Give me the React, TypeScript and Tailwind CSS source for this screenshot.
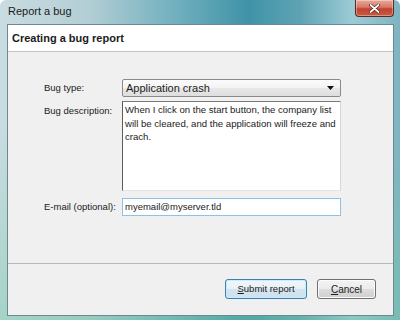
export default function App() {
  return (
    <div className="w-[400px] h-[320px] flex flex-col overflow-hidden rounded-t-[6px] bg-[linear-gradient(180deg,rgba(0,0,0,0)_0%,rgba(0,0,0,0)_40%,rgba(110,200,160,0.4)_100%),linear-gradient(90deg,#c9dce1_0%,#b3ced5_22%,#6eaebd_45%,#3f93a7_62%,#5ea3b4_75%,#9ccbd5_88%,#7fb3c1_100%)] font-['Liberation_Sans',Arial,sans-serif] text-[#1b1b1b]">
      {/* title bar */}
      <div className="h-[24px] flex items-start justify-between shrink-0">
        <div className="pl-[8px] pt-[5px] text-[11px] leading-[13px] text-[#1a1a1a]">Report a bug</div>
        <button className="mr-[6px] w-[39px] h-[17px] rounded-b-[4px] border border-t-0 border-[#5a2a24] bg-[linear-gradient(180deg,#e7aa9d_0%,#d77766_45%,#c0432f_55%,#c85a3f_100%)] flex items-center justify-center shadow-[inset_0_0_0_1px_rgba(255,255,255,0.35)]">
          <svg width="11" height="9" viewBox="0 0 11 9">
            <path d="M1.5 1 L9.5 8 M9.5 1 L1.5 8" stroke="#4a1a14" strokeWidth="3" strokeLinecap="round" />
            <path d="M1.5 1 L9.5 8 M9.5 1 L1.5 8" stroke="#ffffff" strokeWidth="1.8" strokeLinecap="round" />
          </svg>
        </button>
      </div>

      {/* client area */}
      <div className="flex-1 ml-[7px] mr-[6px] mb-[4px] border border-[#6f8790] bg-[#f0f0f0] flex flex-col">
        <div className="h-[27px] shrink-0 bg-white border-b border-[#c8c2c2] flex items-center pl-[4px] text-[11px] font-bold">
          Creating a bug report
        </div>

        <div className="flex-1 pt-[27px] pl-[36px] flex flex-col gap-[4px]">
          <div className="flex items-center">
            <div className="w-[78px] text-[9.5px]">Bug type:</div>
            <div className="w-[219px] h-[18px] rounded-[2px] border border-[#8a8a8a] bg-[linear-gradient(180deg,#fbfbfb_0%,#f3f3f3_50%,#e8e8e8_51%,#dedede_100%)] flex items-center justify-between pl-[3px] pr-[6px]">
              <span className="text-[11px] leading-[12px]">Application crash</span>
              <svg width="7" height="4" viewBox="0 0 7 4">
                <path d="M0 0 H7 L3.5 4 Z" fill="#111" />
              </svg>
            </div>
          </div>

          <div className="flex items-start">
            <div className="w-[78px] pt-[3px] text-[9.5px]">Bug description:</div>
            <div className="w-[219px] h-[90px] bg-white border border-t-[#7a7a7a] border-l-[#5c5c5c] border-r-[#d7d7d7] border-b-[#e4e4e4] pl-[2px] pr-[1px] pt-[1px] text-[9.6px] leading-[13.5px]">
              When I click on the start button, the company list will be cleared, and the application will freeze and crach.
            </div>
          </div>

          <div className="flex items-center mt-[3px]">
            <div className="w-[78px] text-[9.5px]">E-mail (optional):</div>
            <div className="w-[219px] h-[18px] bg-white border border-[#8ec0e8] flex items-center pl-[2px] text-[9.5px]">
              myemail@myserver.tld
            </div>
          </div>
        </div>

        <div className="h-[52px] shrink-0 border-t border-[#b9b9b9] flex items-start justify-end gap-[10px] pt-[15px] pr-[17px]">
          <button className="w-[82px] h-[20px] rounded-[3px] border border-[#3c7fb1] bg-[linear-gradient(180deg,#f2f8fc_0%,#e6f0f7_50%,#d3e4ef_51%,#cfe2ee_100%)] shadow-[inset_0_0_0_1px_#c9ecfb] text-[9.5px]">
            <span className="underline underline-offset-[1px]">S</span>ubmit report
          </button>
          <button className="w-[59px] h-[20px] rounded-[3px] border border-[#707070] bg-[linear-gradient(180deg,#f3f3f3_0%,#ebebeb_50%,#dddddd_51%,#cfcfcf_100%)] shadow-[inset_0_0_0_1px_#fbfbfb] text-[10px]">
            <span className="underline underline-offset-[1px]">C</span>ancel
          </button>
        </div>
      </div>
    </div>
  );
}
